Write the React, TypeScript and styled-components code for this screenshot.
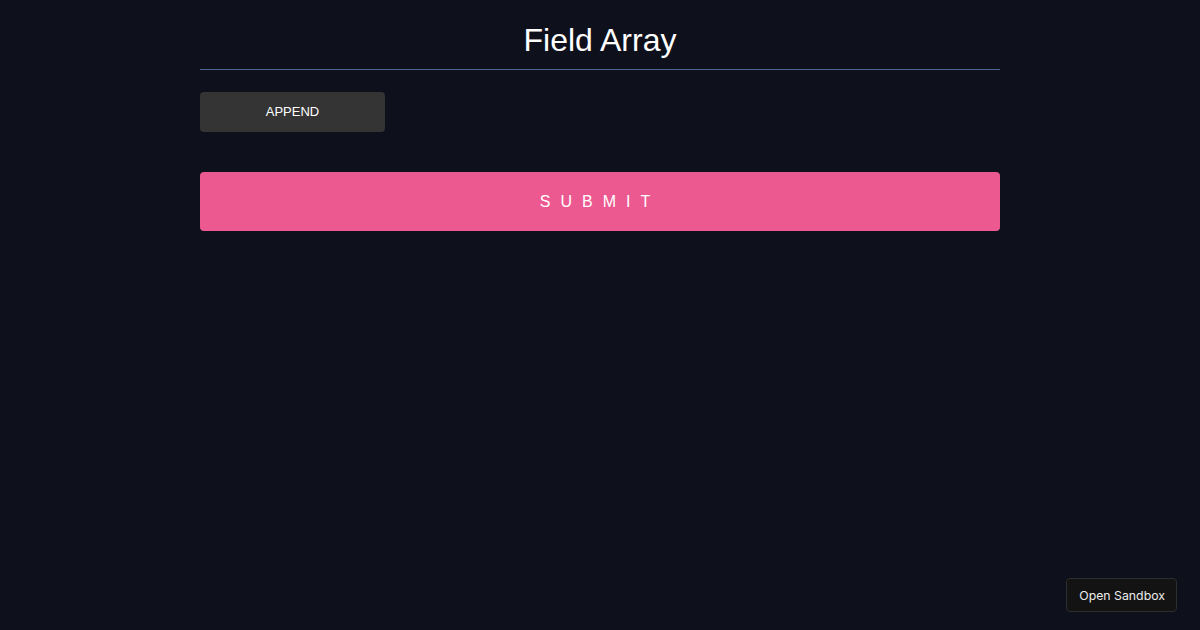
import styled, { createGlobalStyle } from 'styled-components';
import * as React from 'react';

const GlobalStyle = createGlobalStyle`
  html, body {
    margin: 0;
    padding: 0;
    background: #0e101c;
    font-family: 'Liberation Sans', Arial, sans-serif;
    color: #fff;
  }
`;

const Form = styled.form`
  max-width: 800px;
  margin: 0 auto;
  display: flex;
  flex-flow: column nowrap;
`;

const Title = styled.h1`
  margin: 22px 0 0;
  padding-bottom: 10px;
  border-bottom: 1px solid rgb(79, 98, 148);
  font: normal 400 32px / normal 'Liberation Sans', Arial, sans-serif;
  color: #fff;
  text-align: center;
`;

const List = styled.section`
  display: flex;
  gap: 10px;
  margin-top: 22px;
`;

const AppendButton = styled.button`
  width: 185px;
  height: 40px;
  padding: 0 0 1px;
  border: none;
  border-radius: 4px;
  background: #343434;
  color: #fff;
  font: normal 400 13px / normal 'Liberation Sans', Arial, sans-serif;
  text-transform: uppercase;
  cursor: pointer;
`;

const SubmitButton = styled.button`
  margin-top: 40px;
  height: 59px;
  border: none;
  border-radius: 4px;
  background: #ec5990;
  color: #fff;
  font: normal 400 16px / normal 'Liberation Sans', Arial, sans-serif;
  text-transform: uppercase;
  letter-spacing: 10px;
  padding-left: 6px;
  cursor: pointer;
`;

const SandboxLink = styled.a`
  position: fixed;
  right: 23px;
  bottom: 18px;
  display: flex;
  align-items: center;
  height: 32px;
  padding: 0 11px 0 12px;
  border: 1px solid #2e2e2e;
  border-radius: 4px;
  background: #131313;
  color: #ececec;
  font: normal 400 12.3px / normal Inter, 'Liberation Sans', sans-serif;
  text-decoration: none;
`;

export default function App() {
  return (
    <>
      <GlobalStyle />
      <Form onSubmit={(e) => e.preventDefault()}>
        <Title>Field Array</Title>
        <List>
          <AppendButton type="button">append</AppendButton>
        </List>
        <SubmitButton type="submit">submit</SubmitButton>
      </Form>
      <SandboxLink href="#">Open Sandbox</SandboxLink>
    </>
  );
}
